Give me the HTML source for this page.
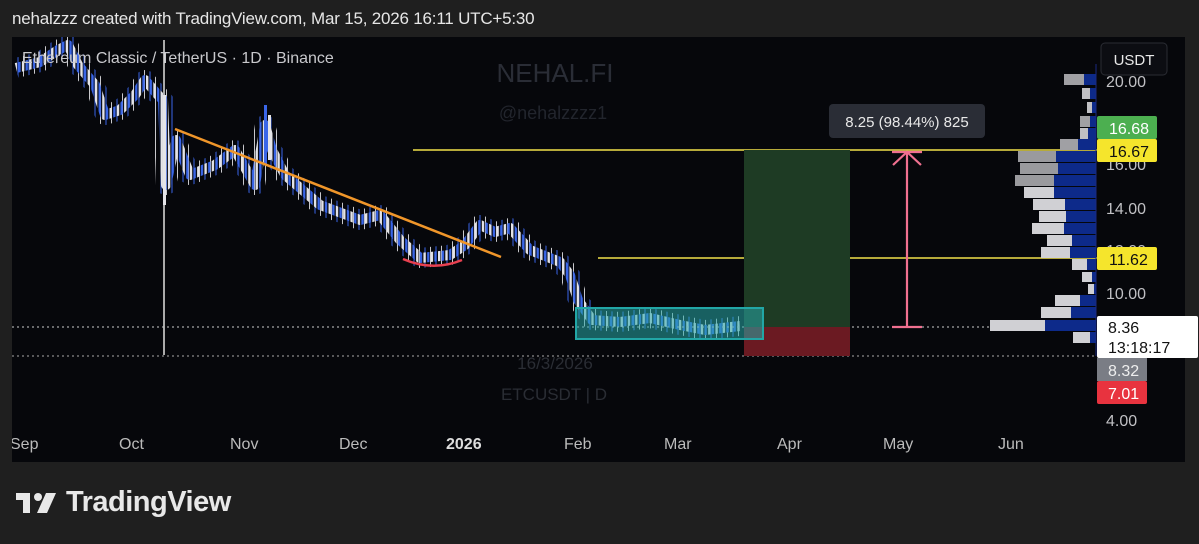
<!DOCTYPE html>
<html><head><meta charset="utf-8"><style>
html,body{margin:0;padding:0;background:#1f1f1f;width:1199px;height:544px;overflow:hidden;font-family:"Liberation Sans",sans-serif}
.hdr{position:absolute;left:12px;top:9px;color:#e6e6e6;font-size:17px;letter-spacing:-0.2px}
#chart{position:absolute;left:12px;top:37px;width:1173px;height:425px;background:#06070b}
.logo{position:absolute;left:66px;top:486px;color:#e8e8e8;font-size:29px;font-weight:bold;letter-spacing:-0.5px}
</style></head><body>
<div class="hdr">nehalzzz created with TradingView.com, Mar 15, 2026 16:11 UTC+5:30</div>
<div id="chart"></div>
<svg width="1199" height="544" style="position:absolute;left:0;top:0">
<defs>
<clipPath id="cp"><rect x="12" y="37" width="1173" height="425"/></clipPath>
<pattern id="pat" patternUnits="userSpaceOnUse" x="0" y="0" width="7.3" height="40">
<rect x="0" y="0" width="2.4" height="40" fill="#e4e4e8"/>
<rect x="3.65" y="0" width="2.4" height="40" fill="#3a66e8"/>
</pattern>
<pattern id="wk" patternUnits="userSpaceOnUse" x="1" y="0" width="11" height="40">
<rect x="0" y="0" width="1" height="40" fill="#c8c8cc"/>
<rect x="5.5" y="0" width="1" height="40" fill="#3a66e8"/>
</pattern>
</defs>
<g clip-path="url(#cp)">
<path d="M16 68 L40 62 L58 50 L68 45 L78 65 L95 85 L105 115 L120 110 L135 95 L145 80 L158 95 L163 100 L166 185 L176 140 L190 175 L215 165 L235 150 L255 185 L265 125 L272 150 L285 175 L320 205 L360 220 L380 215 L400 240 L420 258 L450 255 L465 245 L480 225 L495 232 L510 228 L530 250 L560 262 L570 275 L578 300 L592 320 L620 322 L650 318 L680 325 L705 330 L740 326" fill="none" stroke="url(#wk)" stroke-width="20" stroke-linejoin="round"/>
<path d="M16 68 L40 62 L58 50 L68 45 L78 65 L95 85 L105 115 L120 110 L135 95 L145 80 L158 95 L163 100 L166 185 L176 140 L190 175 L215 165 L235 150 L255 185 L265 125 L272 150 L285 175 L320 205 L360 220 L380 215 L400 240 L420 258 L450 255 L465 245 L480 225 L495 232 L510 228 L530 250 L560 262 L570 275 L578 300 L592 320 L620 322 L650 318 L680 325 L705 330 L740 326" fill="none" stroke="url(#pat)" stroke-width="10" stroke-linejoin="round"/>
<rect x="264" y="105" width="3" height="60" fill="#3a66e8"/><rect x="268" y="115" width="3" height="45" fill="#e4e4e8"/>
<line x1="164" y1="40" x2="164" y2="355" stroke="#e0e0e0" stroke-width="1.5"/>
<rect x="163" y="95" width="3" height="110" fill="#e4e4e8"/>
<line x1="413" y1="150" x2="1097" y2="150" stroke="#f0e04a" stroke-width="1.5"/>
<line x1="598" y1="258" x2="1097" y2="258" stroke="#f0e04a" stroke-width="1.5"/>
<line x1="12" y1="327" x2="1097" y2="327" stroke="#ccc" stroke-width="1" stroke-dasharray="2,3"/>
<line x1="12" y1="356" x2="1097" y2="356" stroke="#aaa" stroke-width="1" stroke-dasharray="2,3"/>
<rect x="744" y="150" width="106" height="177" fill="#1e3b24"/>
<rect x="744" y="327" width="106" height="29" fill="#6b1a22"/>
<rect x="576" y="308" width="187" height="31" fill="rgba(40,170,170,0.55)" stroke="#22a6a6" stroke-width="2"/>
<line x1="175" y1="129" x2="501" y2="257" stroke="#f0962a" stroke-width="2.5"/>
<path d="M403 259 Q433 272 462 260" stroke="#e84050" stroke-width="2.5" fill="none"/>
<g stroke="#f07090" stroke-width="2.2" fill="none"><line x1="907" y1="152" x2="907" y2="327"/><line x1="892" y1="152" x2="922" y2="152"/><line x1="892" y1="327" x2="922" y2="327"/><path d="M893 165 L907 152 L921 165"/></g>
<rect x="829" y="104" width="156" height="34" rx="4" fill="#2a2d36"/>
<text x="907" y="127" fill="#e8e8e8" font-size="15" text-anchor="middle">8.25 (98.44%) 825</text>
<text x="555" y="82" fill="#2a2d36" font-size="26" text-anchor="middle">NEHAL.FI</text>
<text x="553" y="119" fill="#22252d" font-size="18" text-anchor="middle">@nehalzzzz1</text>
<text x="555" y="369" fill="#2a2d34" font-size="17" text-anchor="middle">16/3/2026</text>
<text x="554" y="400" fill="#2a2d34" font-size="17" text-anchor="middle">ETCUSDT | D</text>
<text x="22" y="63" fill="#c8c8cc" font-size="16">Ethereum Classic / TetherUS · 1D · Binance</text>
<g>
<rect x="1084" y="74" width="12" height="11" fill="#0d2a8a"/><rect x="1064" y="74" width="20" height="11" fill="#a0a0a4"/>
<rect x="1090" y="88" width="6" height="11" fill="#0d2a8a"/><rect x="1082" y="88" width="8" height="11" fill="#c0c0c4"/>
<rect x="1092" y="102" width="4" height="11" fill="#0d2a8a"/><rect x="1087" y="102" width="5" height="11" fill="#c0c0c4"/>
<rect x="1090" y="116" width="6" height="11" fill="#0d2a8a"/><rect x="1080" y="116" width="10" height="11" fill="#a0a0a4"/>
<rect x="1088" y="128" width="8" height="11" fill="#0d2a8a"/><rect x="1080" y="128" width="8" height="11" fill="#c0c0c4"/>
<rect x="1078" y="139" width="18" height="11" fill="#0d2a8a"/><rect x="1060" y="139" width="18" height="11" fill="#a0a0a4"/>
<rect x="1056" y="151" width="40" height="11" fill="#0d2a8a"/><rect x="1018" y="151" width="38" height="11" fill="#9a9a9e"/>
<rect x="1058" y="163" width="38" height="11" fill="#0d2a8a"/><rect x="1020" y="163" width="38" height="11" fill="#9a9a9e"/>
<rect x="1054" y="175" width="42" height="11" fill="#0d2a8a"/><rect x="1015" y="175" width="39" height="11" fill="#9a9a9e"/>
<rect x="1054" y="187" width="42" height="11" fill="#0d2a8a"/><rect x="1024" y="187" width="30" height="11" fill="#d0d0d4"/>
<rect x="1065" y="199" width="31" height="11" fill="#0d2a8a"/><rect x="1033" y="199" width="32" height="11" fill="#d0d0d4"/>
<rect x="1066" y="211" width="30" height="11" fill="#0d2a8a"/><rect x="1039" y="211" width="27" height="11" fill="#d0d0d4"/>
<rect x="1064" y="223" width="32" height="11" fill="#0d2a8a"/><rect x="1032" y="223" width="32" height="11" fill="#d0d0d4"/>
<rect x="1072" y="235" width="24" height="11" fill="#0d2a8a"/><rect x="1047" y="235" width="25" height="11" fill="#d0d0d4"/>
<rect x="1070" y="247" width="26" height="11" fill="#0d2a8a"/><rect x="1041" y="247" width="29" height="11" fill="#d0d0d4"/>
<rect x="1087" y="259" width="9" height="11" fill="#0d2a8a"/><rect x="1072" y="259" width="15" height="11" fill="#d0d0d4"/>
<rect x="1092" y="272" width="4" height="10" fill="#0d2a8a"/><rect x="1082" y="272" width="10" height="10" fill="#d0d0d4"/>
<rect x="1094" y="284" width="2" height="10" fill="#0d2a8a"/><rect x="1088" y="284" width="6" height="10" fill="#d0d0d4"/>
<rect x="1080" y="295" width="16" height="11" fill="#0d2a8a"/><rect x="1055" y="295" width="25" height="11" fill="#d0d0d4"/>
<rect x="1071" y="307" width="25" height="11" fill="#0d2a8a"/><rect x="1041" y="307" width="30" height="11" fill="#d0d0d4"/>
<rect x="1045" y="320" width="51" height="11" fill="#0d2a8a"/><rect x="990" y="320" width="55" height="11" fill="#d0d0d4"/>
<rect x="1090" y="332" width="6" height="11" fill="#0d2a8a"/><rect x="1073" y="332" width="17" height="11" fill="#d0d0d4"/>
</g>
<line x1="1096" y1="64" x2="1096" y2="356" stroke="#1a2a80" stroke-width="1"/>
<g fill="#c0c0c4" font-size="16">
<text x="1106" y="87">20.00</text><text x="1106" y="170">16.00</text><text x="1106" y="214">14.00</text><text x="1106" y="256">12.00</text><text x="1106" y="299">10.00</text><text x="1106" y="426">4.00</text>
</g>
<g fill="#bbb" font-size="16">
<text x="10" y="449">Sep</text><text x="119" y="449">Oct</text><text x="230" y="449">Nov</text><text x="339" y="449">Dec</text>
<text x="446" y="449" font-weight="bold" fill="#ddd">2026</text><text x="564" y="449">Feb</text><text x="664" y="449">Mar</text>
<text x="777" y="449">Apr</text><text x="883" y="449">May</text><text x="998" y="449">Jun</text>
</g>
</g>
<rect x="1101" y="43" width="66" height="32" rx="4" fill="#0c0d12" stroke="#2a2c33"/>
<text x="1134" y="65" fill="#e8e8e8" font-size="15" text-anchor="middle">USDT</text>
<rect x="1097" y="116" width="60" height="23" rx="2" fill="#4caf50"/><text x="1109" y="134" fill="#fff" font-size="16">16.68</text>
<rect x="1097" y="139" width="60" height="23" rx="2" fill="#f5e52c"/><text x="1109" y="157" fill="#111" font-size="16">16.67</text>
<rect x="1097" y="247" width="60" height="23" rx="2" fill="#f5e52c"/><text x="1109" y="265" fill="#111" font-size="16">11.62</text>
<rect x="1097" y="316" width="101" height="42" rx="2" fill="#ffffff"/><text x="1108" y="333" fill="#111" font-size="16">8.36</text><text x="1108" y="353" fill="#111" font-size="16">13:18:17</text>
<rect x="1097" y="358" width="50" height="23" fill="#7a7d85"/><text x="1108" y="376" fill="#eee" font-size="16">8.32</text>
<rect x="1097" y="381" width="50" height="23" rx="2" fill="#e8333f"/><text x="1108" y="399" fill="#fff" font-size="16">7.01</text>
<g fill="#e8e8e8" transform="translate(16,489)"><rect x="0" y="4" width="14" height="7"/><rect x="7" y="4" width="7" height="20"/><circle cx="22" cy="8" r="4"/><path d="M30 4 L40 4 L31 24 L21 24 Z"/></g>
</svg>
<div class="logo">TradingView</div>
</body></html>
